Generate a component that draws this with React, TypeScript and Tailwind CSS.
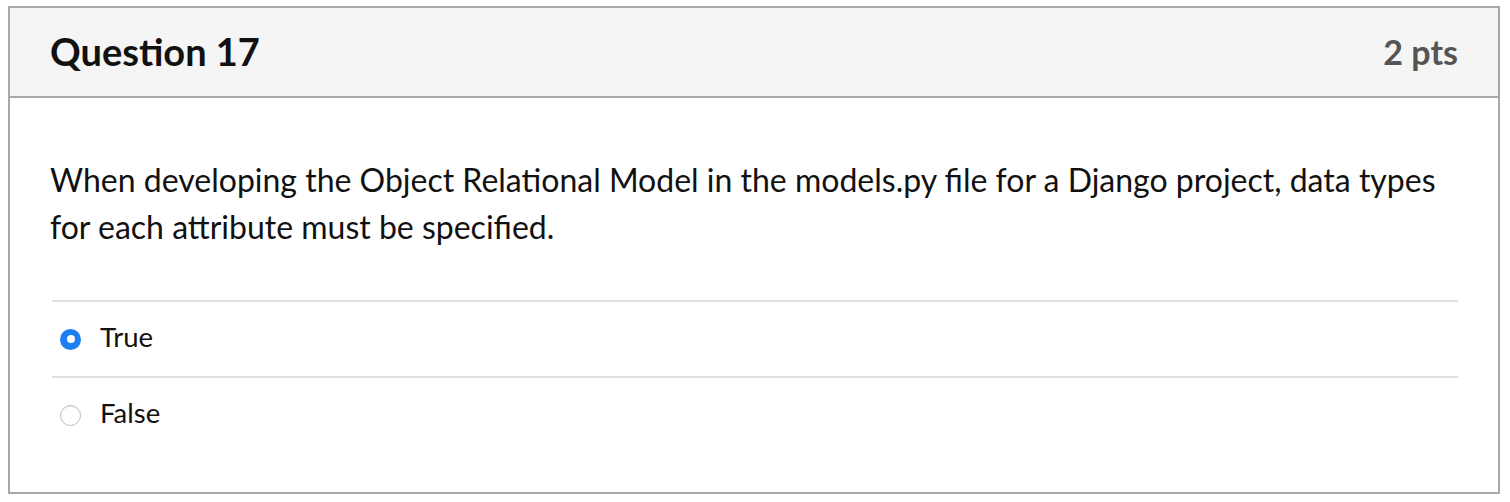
export default function App() {
  return (
    <div className="w-[1510px] h-[502px] bg-white pt-[6px] pl-[8px]" style={{ fontFamily: 'Lato, "Noto Sans", sans-serif' }}>
      <div className="w-[1492px] h-[488px] border-2 border-[#a8a8a8] flex flex-col">
        {/* Header */}
        <div className="h-[90px] bg-[#f5f5f5] border-b-2 border-[#a8a8a8] flex items-center justify-between pl-[40px] pr-[40px]">
          <h2 className="text-[38px] font-bold text-[#111] -mt-[2px]">Question 17</h2>
          <span className="text-[34px] font-bold text-[#555] -mt-[2px]">2 pts</span>
        </div>

        {/* Body */}
        <div className="pl-[40px] pr-[40px] pt-[58px]">
          <p className="text-[32px] leading-[47px] text-[#111]">
            When developing the Object Relational Model in the models.py file for a Django project, data types for each attribute must be specified.
          </p>

          <div className="mt-[50px] ml-[2px] border-t-2 border-[#e0e0e0]">
            <label className="h-[76px] flex items-center gap-[19px] pl-[8px] border-b-2 border-[#e0e0e0]">
              <span className="w-[21px] h-[21px] rounded-full bg-[#1b7ff2] flex items-center justify-center">
                <span className="w-[8px] h-[8px] rounded-full bg-white" />
              </span>
              <span className="text-[27.5px] text-[#111] -mt-[4px]">True</span>
            </label>
            <label className="h-[74px] flex items-center gap-[19px] pl-[8px]">
              <span className="w-[21px] h-[21px] rounded-full border border-[#bdbdbd] bg-white shadow-[inset_0_1px_1px_rgba(0,0,0,0.08)]" />
              <span className="text-[27.5px] text-[#111] -mt-[4px]">False</span>
            </label>
          </div>
        </div>
      </div>
    </div>
  );
}
